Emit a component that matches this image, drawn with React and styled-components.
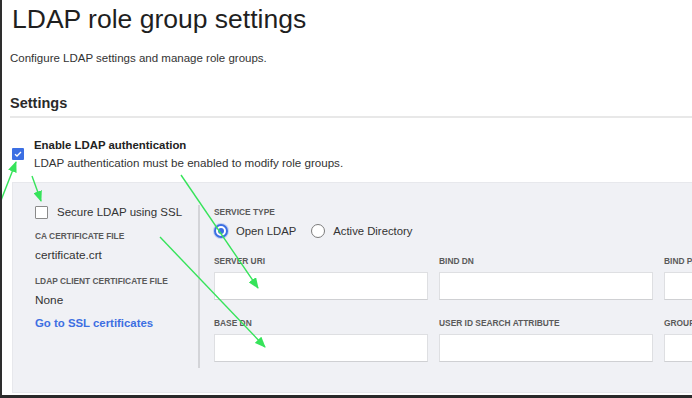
import React from "react";
import styled, { createGlobalStyle } from "styled-components";

const Global = createGlobalStyle`
  html, body { margin: 0; padding: 0; background: #fff; }
  body { font-family: "Liberation Sans", Arial, sans-serif; color: #2b2b2b; }
  * { box-sizing: border-box; }
`;

const Page = styled.div`
  position: relative;
  width: 692px;
  height: 398px;
  overflow: hidden;
  border-left: 2px solid #2e2e2e;
  border-bottom: 3px solid #2a2a2a;
  padding-left: 8px;
  display: flex;
  flex-direction: column;
`;

const Title = styled.h1`
  margin: 3px 0 0 2px;
  font-size: 26.5px;
  line-height: 32px;
  font-weight: 400;
  color: #1f1f1f;
  white-space: nowrap;
`;

const Subtitle = styled.p`
  margin: 15px 0 0;
  font-size: 11.5px;
  line-height: 16px;
  color: #333;
`;

const SectionTitle = styled.h2`
  margin: 27px 0 0;
  font-size: 14.5px;
  line-height: 20px;
  font-weight: 700;
  color: #2a2a2a;
`;

const Rule = styled.div`
  margin-top: 3px;
  height: 2px;
  background: #e8e8e8;
`;

const EnableRow = styled.div`
  margin: 19px 0 0 2px;
  display: flex;
  gap: 10px;
`;

const Box = styled.span`
  flex: none;
  width: ${(p) => p.$size}px;
  height: ${(p) => p.$size}px;
  margin-top: ${(p) => p.$top || 0}px;
  border-radius: 1px;
  display: flex;
  align-items: center;
  justify-content: center;
  background: ${(p) => (p.$checked ? "#3c6fe3" : "#fff")};
  border: ${(p) => (p.$checked ? "none" : "1px solid #8a8a8a")};
`;

const EnableText = styled.div`
  display: flex;
  flex-direction: column;
`;

const EnableLabel = styled.span`
  font-size: 11.4px;
  line-height: 16px;
  font-weight: 700;
  color: #222;
`;

const EnableHint = styled.span`
  margin-top: 1px;
  font-size: 11.6px;
  line-height: 18px;
  color: #333;
`;

const Panel = styled.div`
  margin: 10px 0 2px 2px;
  flex: 1;
  background: #f0f1f5;
  border: 1px solid #e7e8ec;
  border-right: none;
  padding: 22px 0 0 22px;
  display: flex;
  align-items: flex-start;
`;

const LeftCol = styled.div`
  width: 163px;
  flex: none;
  display: flex;
  flex-direction: column;
  white-space: nowrap;
`;

const CheckRow = styled.label`
  display: flex;
  align-items: center;
  gap: 9px;
  font-size: 11.5px;
  line-height: 14px;
  color: #333;
`;

const FieldLabel = styled.div`
  margin-top: ${(p) => p.$mt || 0}px;
  font-size: 8.4px;
  line-height: 12px;
  font-weight: 700;
  text-transform: uppercase;
  color: #5a5a5a;
  white-space: nowrap;
`;

const Value = styled.div`
  margin-top: 4px;
  font-size: 11.8px;
  line-height: 18px;
  color: #333;
`;

const Link = styled.a`
  margin-top: 5px;
  font-size: 11.4px;
  line-height: 18px;
  font-weight: 700;
  color: #3d6fe2;
  text-decoration: none;
`;

const RightCol = styled.div`
  border-left: 2px solid #d3d4d8;
  padding: 1px 0 6px 14px;
  display: flex;
  flex-direction: column;
`;

const RadioRow = styled.div`
  margin-top: 4px;
  display: flex;
  align-items: center;
  font-size: 11.3px;
  line-height: 18px;
  color: #333;
`;

const Radio = styled.span`
  width: 14px;
  height: 14px;
  border-radius: 50%;
  flex: none;
  background: #fff;
  border: ${(p) => (p.$on ? "2px solid #3c6fe3" : "1px solid #7c7c7c")};
  box-shadow: ${(p) => (p.$on ? "0 0 0 1px rgba(60,111,227,0.25)" : "none")};
  display: flex;
  align-items: center;
  justify-content: center;
  &::after {
    content: "";
    width: 6px;
    height: 6px;
    border-radius: 50%;
    background: ${(p) => (p.$on ? "#3c6fe3" : "transparent")};
  }
`;

const RadioOption = styled.span`
  display: flex;
  align-items: center;
  gap: 8px;
  margin-right: 15px;
`;

const Grid = styled.div`
  margin-top: 15px;
  display: grid;
  grid-template-columns: repeat(3, 214px);
  column-gap: 11px;
  row-gap: 17px;
`;

const Field = styled.div`
  display: flex;
  flex-direction: column;
  gap: 5px;
`;

const Input = styled.div`
  height: 28px;
  background: #fff;
  border: 1px solid #dedfe2;
  border-bottom-color: #cfd0d3;
`;

const Overlay = styled.svg`
  position: absolute;
  left: -2px;
  top: 0;
  pointer-events: none;
`;

const arrows = [
  [-2, 208, 16, 162],
  [32, 176, 41, 201],
  [181, 175, 258, 288],
  [160, 237, 265, 347],
];

const fields = [
  "Server URI",
  "Bind DN",
  "Bind password",
  "Base DN",
  "User ID search attribute",
  "Group search attribute",
];

export default function App() {
  return (
    <>
      <Global />
      <Page>
        <Title>LDAP role group settings</Title>
        <Subtitle>Configure LDAP settings and manage role groups.</Subtitle>
        <SectionTitle>Settings</SectionTitle>
        <Rule />
        <EnableRow>
          <Box $size={12} $top={11} $checked>
            <svg width="8" height="6" viewBox="0 0 8 6">
              <path d="M1 3.2 L3 5 L7 1" fill="none" stroke="#fff" strokeWidth="1.3" />
            </svg>
          </Box>
          <EnableText>
            <EnableLabel>Enable LDAP authentication</EnableLabel>
            <EnableHint>LDAP authentication must be enabled to modify role groups.</EnableHint>
          </EnableText>
        </EnableRow>
        <Panel>
          <LeftCol>
            <CheckRow>
              <Box $size={13} />
              Secure LDAP using SSL
            </CheckRow>
            <FieldLabel $mt={11}>CA certificate file</FieldLabel>
            <Value>certificate.crt</Value>
            <FieldLabel $mt={11}>LDAP client certificate file</FieldLabel>
            <Value>None</Value>
            <Link href="#">Go to SSL certificates</Link>
          </LeftCol>
          <RightCol>
            <FieldLabel>Service type</FieldLabel>
            <RadioRow>
              <RadioOption>
                <Radio $on />
                Open LDAP
              </RadioOption>
              <RadioOption>
                <Radio />
                Active Directory
              </RadioOption>
            </RadioRow>
            <Grid>
              {fields.map((f) => (
                <Field key={f}>
                  <FieldLabel>{f}</FieldLabel>
                  <Input />
                </Field>
              ))}
            </Grid>
          </RightCol>
        </Panel>
        <Overlay width="692" height="398" viewBox="0 0 692 398">
          <defs>
            <marker id="head" markerWidth="11" markerHeight="9" refX="10" refY="4.5" orient="auto" markerUnits="userSpaceOnUse">
              <path d="M0 0 L11 4.5 L0 9 Z" fill="#36e35a" />
            </marker>
          </defs>
          {arrows.map(([x1, y1, x2, y2], i) => (
            <line key={i} x1={x1} y1={y1} x2={x2} y2={y2} stroke="#36e35a" strokeWidth="1.4" markerEnd="url(#head)" />
          ))}
        </Overlay>
      </Page>
    </>
  );
}
